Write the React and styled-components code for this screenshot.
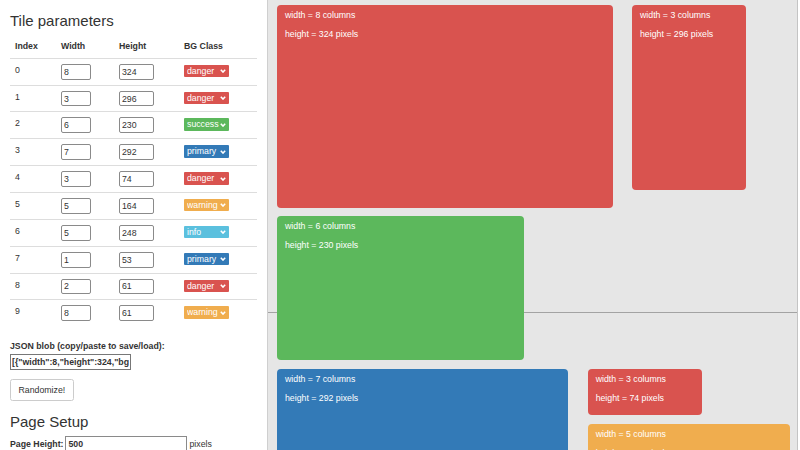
import React, { useState } from "react";
import styled, { createGlobalStyle } from "styled-components";

// the page is drawn at 0.625 of the original size
const SCALE = 0.625;
const GAP = 14;

const COLORS = {
  danger: "#d9534f",
  success: "#5cb85c",
  primary: "#337ab7",
  warning: "#f0ad4e",
  info: "#5bc0de",
};

const START_TILES = [
  { width: 8, height: 324, bgClass: "danger" },
  { width: 3, height: 296, bgClass: "danger" },
  { width: 6, height: 230, bgClass: "success" },
  { width: 7, height: 292, bgClass: "primary" },
  { width: 3, height: 74, bgClass: "danger" },
  { width: 5, height: 164, bgClass: "warning" },
  { width: 5, height: 248, bgClass: "info" },
  { width: 1, height: 53, bgClass: "primary" },
  { width: 2, height: 61, bgClass: "danger" },
  { width: 8, height: 61, bgClass: "warning" },
];

const GlobalStyle = createGlobalStyle`
  html, body {
    margin: 0;
    height: 100%;
    overflow: hidden;
  }
  body {
    font-family: "Liberation Sans", Arial, Helvetica, sans-serif;
    font-size: 8.75px;
    line-height: 12.5px;
    color: #333;
    background: #fff;
  }
  * { box-sizing: border-box; }
`;

const Page = styled.div`
  display: flex;
  height: 100vh;
`;

const Sidebar = styled.aside`
  flex: none;
  width: 267px;
  padding: 0 10px;
  overflow: hidden;
`;

const Heading = styled.h3`
  margin: 12.5px 0 6.25px;
  font-size: 15px;
  font-weight: 500;
  line-height: 1.1;
`;

const Table = styled.table`
  width: 100%;
  border-collapse: collapse;
  margin-bottom: 14px;
`;

const Th = styled.th`
  text-align: left;
  padding: 5px;
  border-bottom: 1.25px solid #ddd;
  vertical-align: bottom;
  font-weight: bold;
  width: ${(p) => p.$w}px;
`;

const Td = styled.td`
  padding: 5px;
  border-top: 1px solid #ddd;
  vertical-align: top;
`;

const NumInput = styled.input`
  display: block;
  width: ${(p) => p.$w}px;
  height: 15.85px;
  padding: 0 2px;
  border: 1px solid #8a8a8a;
  border-radius: 2px;
  font: inherit;
  color: #333;
  background: #fff;
`;

const SelectWrap = styled.div`
  position: relative;
  width: 45px;
  height: 12.5px;
  margin-top: 1px;
`;

const ClassSelect = styled.select`
  appearance: none;
  display: block;
  width: 100%;
  height: 100%;
  padding: 0 0 0 3px;
  border: none;
  border-radius: 1px;
  font: inherit;
  line-height: 12.5px;
  color: #fff;
  background: ${(p) => COLORS[p.$bg]};
`;

const Chevron = styled.svg`
  position: absolute;
  right: 3px;
  top: 4.5px;
  pointer-events: none;
`;

const Label = styled.label`
  display: block;
  font-weight: bold;
  margin-bottom: 1px;
`;

const BlobInput = styled.input`
  display: block;
  width: 121px;
  height: 16px;
  padding: 0 1px;
  border: 1px solid #777;
  font: inherit;
  font-weight: bold;
  color: #333;
  margin-bottom: 9.5px;
`;

const Button = styled.button`
  display: block;
  padding: 3.75px 7.5px;
  font: inherit;
  color: #333;
  background: #fff;
  border: 1px solid #ccc;
  border-radius: 2.5px;
`;

const SetupRow = styled.div`
  display: flex;
  align-items: center;
  gap: 2px;
`;

const SetupInput = styled.input`
  width: 122px;
  height: 16px;
  padding: 0 2px;
  border: 1px solid #8a8a8a;
  font: inherit;
  font-weight: bold;
  color: #333;
`;

const Canvas = styled.main`
  flex: 1;
  margin-right: 2px;
  padding: 5px 9px;
  border-left: 1px solid #cfcfcf;
  border-right: 1px solid #c4c4c4;
  overflow: hidden;
  background: linear-gradient(
      to bottom,
      transparent 312px,
      #a3a3a3 312px,
      #a3a3a3 313px,
      transparent 313px
    ),
    #e6e6e6;
`;

const TileGrid = styled.div`
  display: grid;
  grid-template-columns: repeat(12, 25.2px);
  column-gap: 19.2px;
  grid-auto-rows: ${SCALE}px;
`;

const Tile = styled.div`
  border-radius: 4px;
  padding: 4px 8px;
  color: #fff;
  overflow: hidden;
  background: ${(p) => COLORS[p.$bg]};

  p {
    margin: 0 0 6.25px;
  }
`;

// tiles are placed in order, each one at the lowest free spot that is not above the previous tile
function packTiles(tiles) {
  const cols = new Array(12).fill(0);
  let minY = 0;
  return tiles.map((t) => {
    let best = null;
    for (let c = 0; c + t.width <= 12; c++) {
      const y = Math.max(minY, ...cols.slice(c, c + t.width));
      if (best === null || y < best.y) best = { x: c, y };
    }
    for (let c = best.x; c < best.x + t.width; c++) cols[c] = best.y + t.height + GAP;
    minY = best.y;
    return { ...t, ...best };
  });
}

export default function App() {
  const [tiles, setTiles] = useState(START_TILES);
  const [pageHeight, setPageHeight] = useState(500);

  const update = (i, key, value) => {
    setTiles(tiles.map((t, j) => (j === i ? { ...t, [key]: value } : t)));
  };

  const randomize = () => {
    const names = Object.keys(COLORS);
    setTiles(
      tiles.map(() => ({
        width: 1 + Math.floor(Math.random() * 8),
        height: 50 + Math.floor(Math.random() * 300),
        bgClass: names[Math.floor(Math.random() * names.length)],
      }))
    );
  };

  const placed = packTiles(tiles);

  return (
    <Page>
      <GlobalStyle />
      <Sidebar>
        <Heading>Tile parameters</Heading>
        <Table>
          <thead>
            <tr>
              <Th $w={46}>Index</Th>
              <Th $w={58}>Width</Th>
              <Th $w={65}>Height</Th>
              <Th $w={78}>BG Class</Th>
            </tr>
          </thead>
          <tbody>
            {tiles.map((t, i) => (
              <tr key={i}>
                <Td>{i}</Td>
                <Td>
                  <NumInput
                    $w={30}
                    value={t.width}
                    onChange={(e) => update(i, "width", Number(e.target.value) || 1)}
                  />
                </Td>
                <Td>
                  <NumInput
                    $w={35}
                    value={t.height}
                    onChange={(e) => update(i, "height", Number(e.target.value) || 0)}
                  />
                </Td>
                <Td>
                  <SelectWrap>
                    <ClassSelect
                      $bg={t.bgClass}
                      value={t.bgClass}
                      onChange={(e) => update(i, "bgClass", e.target.value)}
                    >
                      {Object.keys(COLORS).map((c) => (
                        <option key={c} value={c}>{c}</option>
                      ))}
                    </ClassSelect>
                    <Chevron width="6" height="4" viewBox="0 0 6 4">
                      <polyline
                        points="0.8,0.8 3,3.1 5.2,0.8"
                        fill="none"
                        stroke="#fff"
                        strokeWidth="1.5"
                      />
                    </Chevron>
                  </SelectWrap>
                </Td>
              </tr>
            ))}
          </tbody>
        </Table>

        <Label>JSON blob (copy/paste to save/load):</Label>
        <BlobInput value={JSON.stringify(tiles)} readOnly />
        <Button onClick={randomize}>Randomize!</Button>

        <Heading>Page Setup</Heading>
        <SetupRow>
          <Label as="span">Page Height:</Label>
          <SetupInput
            value={pageHeight}
            onChange={(e) => setPageHeight(Number(e.target.value) || 0)}
          />
          <span>pixels</span>
        </SetupRow>
      </Sidebar>

      <Canvas>
        <TileGrid>
          {placed.map((t, i) => (
            <Tile
              key={i}
              $bg={t.bgClass}
              style={{
                gridColumn: `${t.x + 1} / span ${t.width}`,
                gridRow: `${t.y + 1} / span ${t.height}`,
              }}
            >
              <p>width = {t.width} columns</p>
              <p>height = {t.height} pixels</p>
            </Tile>
          ))}
        </TileGrid>
      </Canvas>
    </Page>
  );
}
